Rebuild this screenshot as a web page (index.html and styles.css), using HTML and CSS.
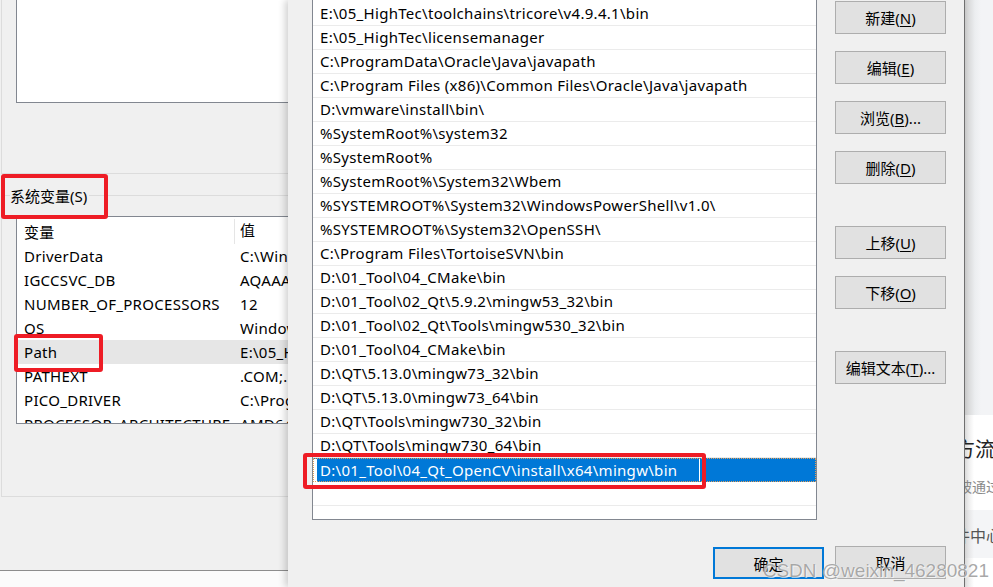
FILE: index.html
```html
<!DOCTYPE html>
<html>
<head>
    <title>编辑环境变量</title>
    <link rel="stylesheet" href="styles.css">
</head>
<body>
<div class="screen">
    <div class="sysprops">
        <div class="window">
            <div class="user-group">
                <div class="listbox user-list"></div>
            </div>
            <div class="sys-group">
                <div class="group-label">系统变量(S)</div>
                <div class="listbox var-list">
                    <div class="var-row var-head">
                        <span class="col-name">变量</span>
                        <span class="col-value">值</span>
                    </div>
                    <div class="var-row"><span class="col-name">DriverData</span><span class="col-value">C:\Windows\System32\Drivers\DriverData</span></div>
                    <div class="var-row"><span class="col-name">IGCCSVC_DB</span><span class="col-value">AQAAANCMnd8BFdERjHoAwE</span></div>
                    <div class="var-row"><span class="col-name">NUMBER_OF_PROCESSORS</span><span class="col-value">12</span></div>
                    <div class="var-row"><span class="col-name">OS</span><span class="col-value">Windows_NT</span></div>
                    <div class="var-row is-current"><span class="col-name">Path</span><span class="col-value">E:\05_HighTec\toolchains</span></div>
                    <div class="var-row"><span class="col-name">PATHEXT</span><span class="col-value">.COM;.EXE;.BAT;.CMD</span></div>
                    <div class="var-row"><span class="col-name">PICO_DRIVER</span><span class="col-value">C:\Program Files</span></div>
                    <div class="var-row"><span class="col-name">PROCESSOR_ARCHITECTURE</span><span class="col-value">AMD64</span></div>
                </div>
            </div>
        </div>
    </div>

    <div class="dialog">
        <div class="dialog-main">
            <div class="path-list">
                <div class="path-row">E:\05_HighTec\toolchains\tricore\v4.9.4.1\bin</div>
                <div class="path-row">E:\05_HighTec\licensemanager</div>
                <div class="path-row">C:\ProgramData\Oracle\Java\javapath</div>
                <div class="path-row">C:\Program Files (x86)\Common Files\Oracle\Java\javapath</div>
                <div class="path-row">D:\vmware\install\bin\</div>
                <div class="path-row">%SystemRoot%\system32</div>
                <div class="path-row">%SystemRoot%</div>
                <div class="path-row">%SystemRoot%\System32\Wbem</div>
                <div class="path-row">%SYSTEMROOT%\System32\WindowsPowerShell\v1.0\</div>
                <div class="path-row">%SYSTEMROOT%\System32\OpenSSH\</div>
                <div class="path-row">C:\Program Files\TortoiseSVN\bin</div>
                <div class="path-row">D:\01_Tool\04_CMake\bin</div>
                <div class="path-row">D:\01_Tool\02_Qt\5.9.2\mingw53_32\bin</div>
                <div class="path-row">D:\01_Tool\02_Qt\Tools\mingw530_32\bin</div>
                <div class="path-row">D:\01_Tool\04_CMake\bin</div>
                <div class="path-row">D:\QT\5.13.0\mingw73_32\bin</div>
                <div class="path-row">D:\QT\5.13.0\mingw73_64\bin</div>
                <div class="path-row">D:\QT\Tools\mingw730_32\bin</div>
                <div class="path-row">D:\QT\Tools\mingw730_64\bin</div>
                <div class="path-row is-selected"><span class="edit-box">D:\01_Tool\04_Qt_OpenCV\install\x64\mingw\bin</span></div>
                <div class="path-row"></div>
                <div class="path-row"></div>
            </div>
            <div class="side-buttons">
                <button class="btn">新建(<u>N</u>)</button>
                <button class="btn">编辑(<u>E</u>)</button>
                <button class="btn">浏览(<u>B</u>)...</button>
                <button class="btn">删除(<u>D</u>)</button>
                <button class="btn btn-group-start">上移(<u>U</u>)</button>
                <button class="btn">下移(<u>O</u>)</button>
                <button class="btn btn-group-start">编辑文本(<u>T</u>)...</button>
            </div>
        </div>
        <div class="dialog-footer">
            <button class="btn btn-default">确定</button>
            <button class="btn">取消</button>
        </div>
    </div>

    <div class="backdrop">
        <div class="backdrop-top"></div>
        <div class="backdrop-card">
            <div class="card-title">方流</div>
            <div class="card-sub">被通过</div>
        </div>
        <div class="backdrop-band">件中心</div>
        <div class="backdrop-rest"></div>
    </div>

    <!-- red annotation frames drawn over the screenshot -->
    <div class="mark mark-label"></div>
    <div class="mark mark-path"></div>
    <div class="mark mark-selected"></div>

    <div class="watermark">CSDN @weixin_46280821</div>
</div>
</body>
</html>
```

FILE: styles.css
```css
body {
    margin: 0;
    background-color: #ffffff;
    font-family: "Noto Sans", "Noto Sans CJK SC", sans-serif;
    font-size: 15px;
    color: #000000;
}

.screen {
    position: relative;
    display: flex;
    width: 993px;
    height: 587px;
    overflow: hidden;
}

/* ---- system properties window (behind) ---- */

.sysprops {
    width: 288px;
    flex: none;
    background-color: #fbfbfb;
}

.window {
    height: 571px;
    box-sizing: border-box;
    background-color: #f0f0f0;
    border-bottom: 1px solid #8d8d8d;
    overflow: hidden;
}

.user-group {
    height: 174px;
    box-sizing: border-box;
    margin-left: 1px;
    padding-left: 14px;
    border-left: 1px solid #dcdcdc;
    border-bottom: 1px solid #dcdcdc;
}

.listbox {
    background-color: #ffffff;
    border: 1px solid #828790;
    width: 300px;
    box-sizing: border-box;
}

.user-list {
    height: 103px;
    border-top: none;
}

.sys-group {
    height: 302px;
    box-sizing: border-box;
    margin-top: 21px;
    margin-left: 1px;
    border: 1px solid #dcdcdc;
    border-right: none;
}

.group-label {
    width: fit-content;
    margin: -10px 0 0 8px;
    padding: 0 2px 0 0;
    line-height: 20px;
    background-color: #f0f0f0;
}

.var-list {
    height: 208px;
    margin: 10px 0 0 14px;
    overflow: hidden;
}

.var-row {
    display: flex;
    height: 24px;
    line-height: 24px;
    white-space: nowrap;
    letter-spacing: 0.3px;
}

.var-head {
    height: 27px;
    line-height: 27px;
}

.col-name {
    width: 218px;
    padding-left: 7px;
    box-sizing: border-box;
    flex: none;
    overflow: hidden;
}

.var-head .col-name {
    border-right: 1px solid #e5e5e5;
    height: 25px;
    margin-top: 2px;
    line-height: 26px;
}

.col-value {
    padding-left: 5px;
}

.var-row.is-current {
    background-color: #e6e6e6;
}

/* ---- edit environment variable dialog ---- */

.dialog {
    width: 677px;
    flex: none;
    box-sizing: border-box;
    padding-left: 24px;
    background-color: #f0f0f0;
    border-right: 1px solid #6f6f6f;
    box-shadow: -3px 0 7px rgba(0, 0, 0, 0.18);
    z-index: 1;
}

.dialog-main {
    display: flex;
    gap: 18px;
}

.path-list {
    width: 505px;
    height: 520px;
    box-sizing: border-box;
    padding-top: 2px;
    background-color: #ffffff;
    border: 1px solid #828790;
    border-top: none;
    overflow: hidden;
}

.path-row {
    height: 24px;
    box-sizing: border-box;
    padding-left: 7px;
    line-height: 23px;
    border-bottom: 1px solid #ebebeb;
    white-space: nowrap;
    letter-spacing: 0.3px;
}

.path-row.is-selected {
    background-color: #0078d7;
    color: #ffffff;
    border-bottom: none;
    outline: 1px dotted #e3a05a;
    outline-offset: -1px;
    padding-left: 0;
    line-height: 24px;
}

.edit-box {
    display: inline-block;
    width: 387px;
    height: 24px;
    box-sizing: border-box;
    padding-left: 3px;
    line-height: 22px;
    border: 1px solid #ffffff;
    border-left-width: 4px;
    border-top: none;
}

.side-buttons {
    display: flex;
    flex-direction: column;
    gap: 17px;
    width: 111px;
    padding-top: 1px;
}

.btn {
    width: 111px;
    height: 33px;
    padding: 0;
    background-color: #e1e1e1;
    border: 1px solid #adadad;
    font-family: "Noto Sans", "Noto Sans CJK SC", sans-serif;
    font-size: 15px;
    color: #000000;
}

.btn u {
    text-underline-offset: 2px;
}

.btn-group-start {
    margin-top: 25px;
}

.dialog-footer {
    display: flex;
    justify-content: flex-end;
    gap: 11px;
    margin-top: 26px;
    padding-right: 18px;
}

.btn-default {
    border: 2px solid #0078d7;
    margin-top: 1px;
    height: 32px;
}

/* ---- web page behind, at the right edge ---- */

.backdrop {
    flex: 1;
    display: flex;
    flex-direction: column;
    overflow: hidden;
    white-space: nowrap;
}

.backdrop-top {
    height: 415px;
    flex: none;
    background: linear-gradient(to right, #cfcfcf, #eceef0 10px, #f3f4f6 16px);
}

.backdrop-card {
    height: 95px;
    flex: none;
    background: linear-gradient(to right, #e2e2e2, #ffffff 9px);
}

.card-title {
    margin: 22px 0 0 -10px;
    font-size: 20px;
    line-height: 26px;
    color: #222222;
}

.card-sub {
    margin: 14px 0 0 -7px;
    font-size: 14px;
    line-height: 20px;
    color: #8a8a8a;
}

.backdrop-band {
    height: 48px;
    flex: none;
    text-indent: -11px;
    line-height: 48px;
    padding-top: 2px;
    box-sizing: border-box;
    font-size: 16px;
    color: #555555;
    background: linear-gradient(to right, #dcdcdc, #f4f5f7 9px);
}

.backdrop-rest {
    flex: 1;
    background: linear-gradient(to right, #e0e0e0, #ffffff 9px);
}

/* ---- annotations ---- */

.mark {
    position: absolute;
    border: 4px solid #ee1c25;
    border-radius: 3px;
    box-sizing: border-box;
    z-index: 2;
}

.mark-label {
    left: 1px;
    top: 174px;
    width: 107px;
    height: 45px;
}

.mark-path {
    left: 14px;
    top: 334px;
    width: 89px;
    height: 38px;
}

.mark-selected {
    left: 303px;
    top: 453px;
    width: 403px;
    height: 36px;
}

.watermark {
    position: absolute;
    right: 4px;
    bottom: 5px;
    z-index: 3;
    font-family: "Liberation Sans", sans-serif;
    font-size: 19px;
    color: rgba(140, 140, 140, 0.75);
    text-shadow: 0 0 1px rgba(255, 255, 255, 0.9), 1px 1px 0 rgba(255, 255, 255, 0.6);
}
```
